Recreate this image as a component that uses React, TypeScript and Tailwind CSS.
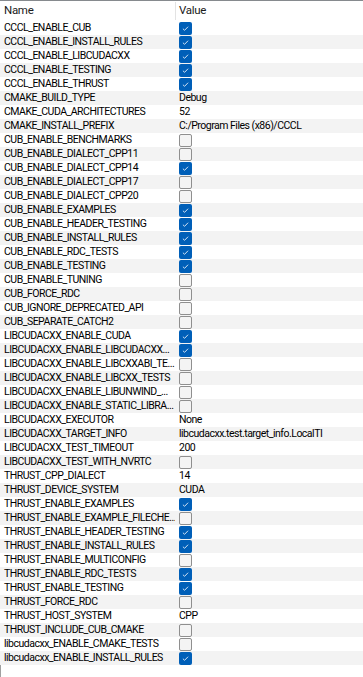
import React from 'react'

type Row = { name: string; value: boolean | string }

const rows: Row[] = [
  { name: 'CCCL_ENABLE_CUB', value: true },
  { name: 'CCCL_ENABLE_INSTALL_RULES', value: true },
  { name: 'CCCL_ENABLE_LIBCUDACXX', value: true },
  { name: 'CCCL_ENABLE_TESTING', value: true },
  { name: 'CCCL_ENABLE_THRUST', value: true },
  { name: 'CMAKE_BUILD_TYPE', value: 'Debug' },
  { name: 'CMAKE_CUDA_ARCHITECTURES', value: '52' },
  { name: 'CMAKE_INSTALL_PREFIX', value: 'C:/Program Files (x86)/CCCL' },
  { name: 'CUB_ENABLE_BENCHMARKS', value: false },
  { name: 'CUB_ENABLE_DIALECT_CPP11', value: false },
  { name: 'CUB_ENABLE_DIALECT_CPP14', value: true },
  { name: 'CUB_ENABLE_DIALECT_CPP17', value: false },
  { name: 'CUB_ENABLE_DIALECT_CPP20', value: false },
  { name: 'CUB_ENABLE_EXAMPLES', value: true },
  { name: 'CUB_ENABLE_HEADER_TESTING', value: true },
  { name: 'CUB_ENABLE_INSTALL_RULES', value: true },
  { name: 'CUB_ENABLE_RDC_TESTS', value: true },
  { name: 'CUB_ENABLE_TESTING', value: true },
  { name: 'CUB_ENABLE_TUNING', value: false },
  { name: 'CUB_FORCE_RDC', value: false },
  { name: 'CUB_IGNORE_DEPRECATED_API', value: false },
  { name: 'CUB_SEPARATE_CATCH2', value: false },
  { name: 'LIBCUDACXX_ENABLE_CUDA', value: true },
  { name: 'LIBCUDACXX_ENABLE_LIBCUDACXX...', value: true },
  { name: 'LIBCUDACXX_ENABLE_LIBCXXABI_TE...', value: false },
  { name: 'LIBCUDACXX_ENABLE_LIBCXX_TESTS', value: false },
  { name: 'LIBCUDACXX_ENABLE_LIBUNWIND_...', value: false },
  { name: 'LIBCUDACXX_ENABLE_STATIC_LIBRA...', value: false },
  { name: 'LIBCUDACXX_EXECUTOR', value: 'None' },
  { name: 'LIBCUDACXX_TARGET_INFO', value: 'libcudacxx.test.target_info.LocalTI' },
  { name: 'LIBCUDACXX_TEST_TIMEOUT', value: '200' },
  { name: 'LIBCUDACXX_TEST_WITH_NVRTC', value: false },
  { name: 'THRUST_CPP_DIALECT', value: '14' },
  { name: 'THRUST_DEVICE_SYSTEM', value: 'CUDA' },
  { name: 'THRUST_ENABLE_EXAMPLES', value: true },
  { name: 'THRUST_ENABLE_EXAMPLE_FILECHE...', value: false },
  { name: 'THRUST_ENABLE_HEADER_TESTING', value: true },
  { name: 'THRUST_ENABLE_INSTALL_RULES', value: true },
  { name: 'THRUST_ENABLE_MULTICONFIG', value: false },
  { name: 'THRUST_ENABLE_RDC_TESTS', value: true },
  { name: 'THRUST_ENABLE_TESTING', value: true },
  { name: 'THRUST_FORCE_RDC', value: false },
  { name: 'THRUST_HOST_SYSTEM', value: 'CPP' },
  { name: 'THRUST_INCLUDE_CUB_CMAKE', value: false },
  { name: 'libcudacxx_ENABLE_CMAKE_TESTS', value: false },
  { name: 'libcudacxx_ENABLE_INSTALL_RULES', value: true },
]

function Check({ on }: { on: boolean }) {
  if (on) {
    return (
      <div className="w-[13px] h-[13px] rounded-[2px] bg-[#005fb8] flex items-center justify-center">
        <svg width="9" height="9" viewBox="0 0 9 9" fill="none">
          <path d="M2.2 5 L3.6 6.3 L6.8 3" stroke="#e8eef8" strokeWidth="0.9" strokeLinecap="round" strokeLinejoin="round" />
        </svg>
      </div>
    )
  }
  return <div className="w-[13px] h-[13px] rounded-[2px] border border-[#8f8f8f] bg-[#f4f4f4]" />
}

export default function App() {
  return (
    <div
      className="w-[363px] h-[677px] bg-white overflow-hidden text-[10.5px] tracking-[-0.5px] text-black flex flex-col"
      style={{ fontFamily: 'Roboto, "Noto Sans", sans-serif' }}
    >
      <div className="border-t border-[#868a8e] h-[21px] shrink-0 flex items-center text-[11.5px] tracking-[-0.3px] text-[#1a1a1a]">
        <div className="w-[175px] pl-[4px]">Name</div>
        <div className="w-px h-[18px] bg-[#e3e3e3]" />
        <div className="pl-[3px]">Value</div>
      </div>
      {rows.map((r, i) => (
        <div key={r.name} className={`h-[14px] shrink-0 flex items-center ${i % 2 === 1 ? 'bg-[#f3f3f3]' : 'bg-white'}`}>
          <div className="w-[175px] pl-[4px] pr-[2px] whitespace-nowrap overflow-hidden leading-[14px]">{r.name}</div>
          <div className="flex-1 pl-[4px] whitespace-nowrap overflow-hidden leading-[14px]">
            {typeof r.value === 'boolean' ? <Check on={r.value} /> : r.value}
          </div>
        </div>
      ))}
      <div className="flex-1 border-l border-[#a0a0a0]" />
    </div>
  )
}
